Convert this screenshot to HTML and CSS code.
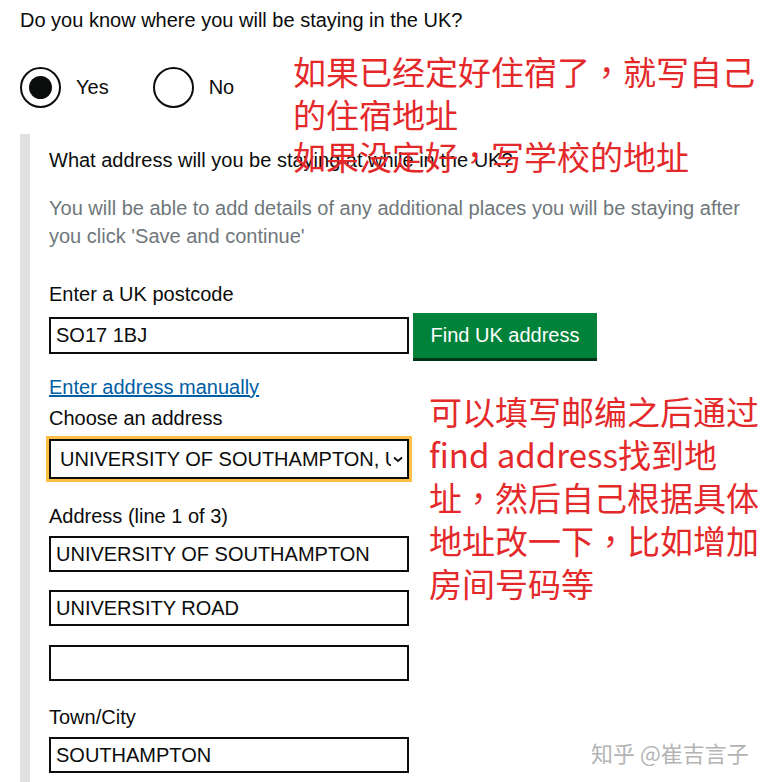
FILE: index.html
```html
<!DOCTYPE html>
<html>
<head>
  <title>Where will you be staying</title>
  <meta charset="UTF-8">
  <meta name="viewport" content="width=device-width, initial-scale=1.0">
  <link rel="stylesheet" href="styles.css">
</head>
<body>
  <div class="page">
    <p class="question">Do you know where you will be staying in the UK?</p>

    <div class="radios">
      <div class="radio">
        <span class="radio-circle checked"></span>
        <span class="radio-label">Yes</span>
      </div>
      <div class="radio">
        <span class="radio-circle"></span>
        <span class="radio-label">No</span>
      </div>
    </div>

    <div class="panel">
      <p class="panel-heading">What address will you be staying at while in the UK?</p>
      <p class="hint">You will be able to add details of any additional places you will be staying after you click 'Save and continue'</p>

      <p class="label label-postcode">Enter a UK postcode</p>
      <div class="postcode-row">
        <div class="input">SO17 1BJ</div>
        <a href="#" class="button">Find UK address</a>
      </div>

      <a href="#" class="link">Enter address manually</a>

      <p class="label label-choose">Choose an address</p>
      <div class="select">
        <span class="select-text">UNIVERSITY OF SOUTHAMPTON, UNIVERSITY ROAD</span>
        <svg class="chevron" width="10" height="7" viewBox="0 0 10 7">
          <path d="M1 1.5 L5 5 L9 1.5" fill="none" stroke="#0b0c0c" stroke-width="1.8"/>
        </svg>
      </div>

      <p class="label label-address">Address (line 1 of 3)</p>
      <div class="input input-address">UNIVERSITY OF SOUTHAMPTON</div>
      <div class="input input-address line-2">UNIVERSITY ROAD</div>
      <div class="input input-address line-3"></div>

      <p class="label label-town">Town/City</p>
      <div class="input input-address">SOUTHAMPTON</div>
    </div>

    <!-- red notes drawn over the screenshot -->
    <div class="note note-top">如果已经定好住宿了<span class="comma">，</span>就写自己<br>的住宿地址<br>如果没定好<span class="comma">，</span>写学校的地址</div>
    <div class="note note-side">可以填写邮编之后通过<br>find address找到地<br>址<span class="comma">，</span>然后自己根据具体<br>地址改一下<span class="comma">，</span>比如增加<br>房间号码等</div>

    <div class="watermark">知乎 @崔吉言子</div>
  </div>
</body>
</html>
```

FILE: styles.css
```css
body {
  margin: 0;
  font-family: "Liberation Sans", Arial, sans-serif;
  color: #0b0c0c;
  background: #fff;
  overflow: hidden;
}
p {
  margin: 0;
}
.page {
  position: relative;
  height: 782px;
  padding: 0 20px;
}
.question {
  padding-top: 8px;
  font-size: 20px;
  line-height: 24px;
}
.radios {
  display: flex;
  margin-top: 35px;
}
.radio {
  display: flex;
  align-items: center;
  margin-right: 44px;
}
.radio-circle {
  position: relative;
  box-sizing: border-box;
  width: 41px;
  height: 41px;
  border: 2px solid #0b0c0c;
  border-radius: 50%;
}
.radio-circle.checked::after {
  content: "";
  position: absolute;
  top: 7px;
  left: 7px;
  width: 23px;
  height: 23px;
  border-radius: 50%;
  background: #0b0c0c;
}
.radio-label {
  margin-left: 15px;
  font-size: 20px;
}
.panel {
  margin-top: 26px;
  padding: 14px 0 40px 19px;
  border-left: 10px solid #dee0e2;
}
.panel-heading {
  font-size: 20px;
  line-height: 24px;
}
.hint {
  margin-top: 22px;
  font-size: 20px;
  line-height: 28px;
  color: #6f777b;
}
.label {
  font-size: 20px;
  line-height: 24px;
}
.label-postcode {
  margin-top: 32px;
}
.postcode-row {
  display: flex;
  align-items: center;
  margin-top: 7px;
}
.input {
  box-sizing: border-box;
  width: 360px;
  height: 37px;
  padding: 0 5px;
  border: 2px solid #0b0c0c;
  font-size: 20px;
  line-height: 33px;
}
.button {
  box-sizing: border-box;
  width: 184px;
  height: 45px;
  margin-left: 4px;
  background: #00823b;
  box-shadow: 0 3px 0 #003618;
  color: #fff;
  font-size: 20px;
  line-height: 44px;
  text-align: center;
  text-decoration: none;
}
.link {
  display: block;
  margin-top: 17px;
  font-size: 20px;
  line-height: 24px;
  color: #005ea5;
}
.label-choose {
  margin-top: 7px;
}
.select {
  display: flex;
  align-items: center;
  box-sizing: border-box;
  width: 360px;
  height: 40px;
  margin-top: 9px;
  padding: 0 4px 0 9px;
  border: 2px solid #0b0c0c;
  outline: 3px solid #ffbf47;
}
.select-text {
  flex: 1;
  overflow: hidden;
  white-space: nowrap;
  font-size: 20px;
}
.chevron {
  margin-left: 2px;
}
.label-address {
  margin-top: 25px;
}
.input-address {
  height: 36px;
  margin-top: 8px;
  line-height: 32px;
}
.input-address.line-2 {
  margin-top: 18px;
}
.input-address.line-3 {
  margin-top: 19px;
}
.label-town {
  margin-top: 24px;
}
.note {
  position: absolute;
  font-family: "Noto Sans CJK SC", sans-serif;
  font-size: 33px;
  color: #e4292b;
  white-space: nowrap;
}
.note .comma {
  font-family: "Noto Sans CJK TC", sans-serif;
}
.note-top {
  top: 50px;
  left: 293px;
  line-height: 42.5px;
}
.note-side {
  top: 390px;
  left: 429px;
  line-height: 43px;
}
.watermark {
  position: absolute;
  top: 736px;
  left: 591px;
  font-family: "Noto Sans CJK SC", sans-serif;
  font-size: 22px;
  color: #b4b4b4;
}
```
